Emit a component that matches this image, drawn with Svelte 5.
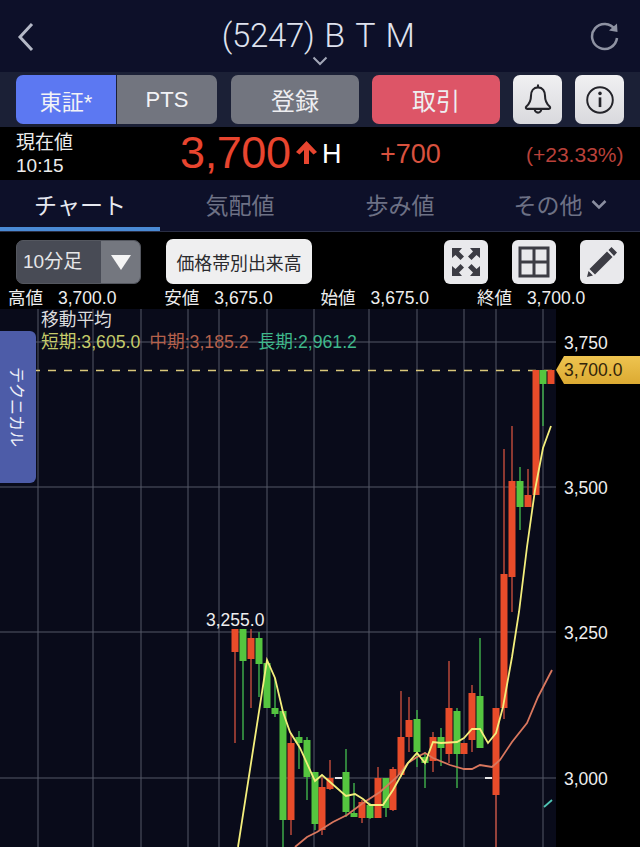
<script>
  const tabs = ['チャート', '気配値', '歩み値'];
  const stats = [
    ['高値', '3,700.0'],
    ['安値', '3,675.0'],
    ['始値', '3,675.0'],
    ['終値', '3,700.0'],
  ];
  const gridX = [38, 93, 141, 188, 219, 267, 314, 369, 417, 464, 496, 543];
  const gridY = [342, 487, 632, 778];
  const prices = [
    ['3,750', 342],
    ['3,500', 487],
    ['3,250', 632],
    ['3,000', 778],
  ];

  // x, up (green), wick top, body top, body bottom, wick bottom
  const candles = [
    [235, 0, 629, 629, 652, 743],
    [243, 1, 629, 629, 661, 740],
    [251, 0, 629, 638, 659, 708],
    [259, 1, 632, 638, 664, 697],
    [267, 1, 660, 663, 708, 708],
    [275, 1, 678, 708, 714, 717],
    [283, 1, 711, 711, 820, 847],
    [291, 0, 733, 743, 820, 835],
    [299, 1, 731, 737, 743, 769],
    [307, 1, 737, 740, 777, 800],
    [315, 1, 772, 772, 824, 830],
    [322, 0, 777, 787, 830, 835],
    [330, 0, 760, 778, 789, 790],
    [346, 1, 749, 772, 812, 817],
    [354, 1, 783, 813, 817, 817],
    [362, 0, 800, 802, 818, 823],
    [370, 1, 803, 805, 818, 819],
    [378, 0, 767, 778, 818, 818],
    [386, 1, 778, 778, 808, 817],
    [393, 0, 767, 769, 810, 811],
    [401, 0, 691, 737, 775, 777],
    [409, 0, 697, 720, 737, 752],
    [417, 1, 710, 719, 752, 767],
    [425, 1, 752, 757, 763, 788],
    [433, 0, 732, 737, 761, 772],
    [441, 1, 728, 737, 748, 766],
    [449, 0, 661, 708, 754, 763],
    [457, 1, 708, 711, 754, 788],
    [464, 0, 743, 743, 754, 754],
    [472, 0, 685, 693, 740, 752],
    [480, 1, 638, 696, 748, 748],
    [496, 0, 708, 708, 795, 847],
    [504, 0, 449, 574, 708, 719],
    [512, 0, 426, 481, 577, 612],
    [520, 1, 467, 481, 507, 530],
    [528, 0, 469, 495, 507, 507],
    [536, 0, 370, 370, 495, 495],
    [543, 1, 370, 370, 384, 426],
    [551, 0, 370, 370, 384, 384],
  ];

  const shortMa = '238,847 267,660 275,678 283,712 290,732 300,748 315,781 322,775 330,782 346,796 355,794 363,799 370,805 383,805 393,790 408,763 417,753 425,763 433,742 441,743 457,742 464,738 472,729 480,729 488,743 496,733 503,707 512,657 519,612 527,547 535,490 543,448 551,426';
  const midMa = '295,847 307,837 317,832 333,822 347,815 363,803 380,792 397,777 408,763 417,757 425,753 433,758 450,765 464,769 472,769 480,765 492,767 500,760 512,742 527,723 538,697 552,670';
</script>

<div class="page">
  <header class="title-bar">
    <svg class="back" viewBox="0 0 18 30" width="18" height="30">
      <path d="M15 2 3 15l12 13" />
    </svg>
    <div class="title">(5247) <span class="name">B T M</span></div>
    <svg class="caret" viewBox="0 0 16 10" width="16" height="10">
      <path d="M1.500 1.500 8 8l6.500-6.500" />
    </svg>
    <svg class="reload" viewBox="0 0 30 30" width="30" height="30">
      <path d="M25 8.500A12.500 12.500 0 1 0 27 17" />
      <path class="tip" d="M19 9.500 27.500 11 27 2.500z" />
    </svg>
  </header>

  <div class="toolbar">
    <div class="segment">
      <button class="seg on">東証*</button>
      <button class="seg">PTS</button>
    </div>
    <button class="act grey">登録</button>
    <button class="act red">取引</button>
    <button class="sq" aria-label="alert">
      <svg viewBox="0 0 30 36" width="28" height="34">
        <path d="M15 4.500c-5 0-7.500 4-7.500 9 0 6-2 9-5 11.500-1 1-.5 2.500 1 2.500h23c1.500 0 2-1.500 1-2.500-3-2.500-5-5.500-5-11.500 0-5-2.500-9-7.500-9z" />
        <path d="M15 1.500v3M11.500 28a3.500 3.500 0 0 0 7 0" />
      </svg>
    </button>
    <button class="sq" aria-label="info">
      <svg viewBox="0 0 34 34" width="30" height="30">
        <circle cx="17" cy="17" r="14.500" />
        <path class="thick" d="M17 14v11" />
        <circle class="dot" cx="17" cy="9.500" r="2" />
      </svg>
    </button>
  </div>

  <section class="quote">
    <div class="quote-label">
      <div>現在値</div>
      <div>10:15</div>
    </div>
    <div class="price">3,700</div>
    <svg class="arrow" viewBox="0 0 21 23" width="21" height="23">
      <path d="M10.500 0 21 11l-3.500 2.500-4.500-4.500v14H8V9l-4.500 4.500L0 11z" />
    </svg>
    <div class="flag">H</div>
    <div class="change">+700</div>
    <div class="pct">(+23.33%)</div>
  </section>

  <nav class="tabs">
    {#each tabs as tab, i}
      <div class="tab" class:active={i === 0}>{tab}</div>
    {/each}
    <div class="tab">
      その他
      <svg viewBox="0 0 16 10" width="16" height="11">
        <path d="M1.500 1.500 8 8l6.500-6.500" />
      </svg>
    </div>
  </nav>

  <section class="controls">
    <div class="buttons">
      <div class="period">
        <span class="period-name">10分足</span>
        <span class="period-open"><i></i></span>
      </div>
      <button class="volume">価格帯別出来高</button>
      <div class="tools">
        <button class="tool" aria-label="expand">
          <svg viewBox="0 0 36 36" width="36" height="36">
            <path d="M4 4h10l-3 3.500 5 5-3.500 3.500-5-5L4 14zM32 4v10l-3.500-3-5 5-3.500-3.500 5-5L22 4zM4 32V22l3.500 3 5-5 3.500 3.500-5 5L14 32zM32 32H22l3-3.500-5-5 3.500-3.500 5 5L32 22z" />
          </svg>
        </button>
        <button class="tool" aria-label="layout">
          <svg class="grid-icon" viewBox="0 0 36 36" width="36" height="36">
            <path d="M4 4h28v28H4zM18 4v28M4 18h28" />
          </svg>
        </button>
        <button class="tool" aria-label="draw">
          <svg viewBox="0 0 36 36" width="36" height="36">
            <path d="M27.500 3 33 8.500 30 12 24.500 6zM23 7.500l5.500 5.500L11 30.500 5.500 25zM4.500 27l4.500 4.500-6 1.500z" />
          </svg>
        </button>
      </div>
    </div>
    <div class="stats">
      {#each stats as [label, value]}
        <div class="stat"><span class="stat-label">{label}</span><span>{value}</span></div>
      {/each}
    </div>
  </section>

  <section class="chart">
    <svg class="plot" viewBox="0 309 640 538" width="640" height="538">
      <rect x="0" y="309" width="556" height="538" fill="#090b1a" />
      {#each gridX as x}
        <line x1={x} x2={x} y1="309" y2="847" class="grid" />
      {/each}
      {#each gridY as y}
        <line x1="0" x2="556" y1={y} y2={y} class="grid" />
      {/each}
      <line x1="0" x2="556" y1="370.500" y2="370.500" class="last" />

      <rect x="335" y="777" width="7" height="2" fill="#e8e8e8" />
      <rect x="485" y="777" width="7" height="2" fill="#e8e8e8" />

      {#each candles as [x, up, wt, bt, bb, wb]}
        <line x1={x} x2={x} y1={wt} y2={wb} class={up ? 'wick-up' : 'wick-down'} />
        <rect x={x - 3.5} y={bt} width="7" height={bb - bt} class={up ? 'body-up' : 'body-down'} />
      {/each}

      <polyline points={midMa} class="ma-mid" />
      <polyline points={shortMa} class="ma-short" />
      <line x1="544" y1="807" x2="552" y2="800" class="ma-long" />
    </svg>

    <div class="legend">
      <div>移動平均</div>
      <div class="legend-row">
        <span class="short">短期:3,605.0</span>
        <span class="mid">中期:3,185.2</span>
        <span class="long">長期:2,961.2</span>
      </div>
    </div>

    <div class="tech"><span>テクニカル</span></div>

    <div class="high-label">3,255.0</div>
    {#each prices as [text, y]}
      <div class="axis" style="top: {y - 309 - 10}px">{text}</div>
    {/each}
    <div class="tag">3,700.0</div>
  </section>
</div>

<style>
  :global(body) {
    margin: 0;
    background: #000;
  }

  .page {
    width: 640px;
    height: 847px;
    overflow: hidden;
    background: #000;
    color: #fff;
    font-family: 'Liberation Sans', 'Noto Sans CJK JP', sans-serif;
  }

  button {
    border: 0;
    padding: 0;
    font: inherit;
    color: inherit;
  }

  svg path,
  svg circle {
    fill: none;
  }

  .title-bar {
    position: relative;
    height: 72px;
    background: #0d1029;
    display: flex;
    align-items: center;
    justify-content: center;
    box-sizing: border-box;
    padding-bottom: 2px;
  }

  .back {
    position: absolute;
    left: 17px;
    top: 22px;
  }

  .back path {
    stroke: #b4b8c6;
    stroke-width: 3;
  }

  .title {
    font-size: 33px;
    color: #dfe2ee;
    font-family: Roboto, 'Liberation Sans', sans-serif;
    font-weight: 300;
    letter-spacing: -0.3px;
    white-space: pre;
    margin-left: -2px;
  }

  .name {
    font-size: 34px;
    margin-left: 2px;
    letter-spacing: 1.2px;
  }

  .caret {
    position: absolute;
    left: 312px;
    top: 56px;
  }

  .caret path {
    stroke: #a2a6b6;
    stroke-width: 2;
  }

  .reload {
    position: absolute;
    left: 590px;
    top: 21px;
  }

  .reload path {
    stroke: #8e92a2;
    stroke-width: 2.500;
  }

  .reload path.tip {
    fill: #8e92a2;
    stroke: none;
  }

  .toolbar {
    height: 55px;
    background: #1b2036;
    display: flex;
    align-items: flex-start;
    box-sizing: border-box;
    padding: 3px 16px 0;
  }

  .segment {
    display: flex;
    gap: 1px;
    width: 201px;
    height: 49px;
    margin-right: 14px;
    border-radius: 7px;
    overflow: hidden;
  }

  .seg {
    flex: 1;
    height: 49px;
    background: #72757f;
    font-size: 22px;
    color: #f3f3f6;
  }

  .seg.on {
    background: #5c78f2;
  }

  .act {
    width: 128px;
    height: 49px;
    border-radius: 7px;
    font-size: 24px;
    margin-right: 13px;
    color: #eeeef1;
  }

  .act.grey {
    background: #72757f;
  }

  .act.red {
    background: #dd5567;
  }

  .sq {
    width: 49px;
    height: 49px;
    border-radius: 7px;
    background: linear-gradient(#f0f0f2, #d9d9dd);
    margin-right: 13px;
    display: flex;
    align-items: center;
    justify-content: center;
  }

  .sq:last-child {
    margin-right: 0;
  }

  .sq path,
  .sq circle {
    stroke: #24242a;
    stroke-width: 2.200;
  }

  .sq path.thick {
    stroke-width: 3;
  }

  .sq circle.dot {
    fill: #24242a;
    stroke: none;
  }

  .quote {
    height: 53px;
    position: relative;
    display: flex;
    align-items: center;
    background: #000;
  }

  .quote-label {
    width: 164px;
    padding-left: 16px;
    font-size: 19px;
    line-height: 23px;
    color: #ececec;
  }

  .price {
    font-size: 45px;
    color: #e8452f;
    letter-spacing: -0.4px;
    width: 116px;
    margin-top: -1px;
  }

  .arrow {
    margin-top: -2px;
  }

  .arrow path {
    fill: #e8452f;
  }

  .flag {
    font-size: 27px;
    margin-left: 5px;
    width: 58px;
    margin-top: 2px;
  }

  .change {
    font-size: 27px;
    color: #d8513e;
    width: 146px;
    margin-top: 2px;
  }

  .pct {
    font-size: 21px;
    color: #b9413a;
    margin-top: 2px;
  }

  .tabs {
    height: 52px;
    box-sizing: border-box;
    background: #0d1029;
    border-bottom: 1px solid #2a2e44;
    display: grid;
    grid-template-columns: repeat(4, 160px);
  }

  .tab {
    display: flex;
    align-items: center;
    justify-content: center;
    gap: 8px;
    padding-bottom: 3px;
    font-size: 23px;
    color: #6d7185;
    box-sizing: border-box;
    height: 51px;
  }

  .tab.active {
    color: #e6e8f0;
    border-bottom: 4px solid #4a8ad4;
    padding-bottom: 0;
  }

  .tab svg path {
    stroke: #8a8ea0;
    stroke-width: 2.500;
  }

  .controls {
    height: 77px;
    background: #000;
    box-sizing: border-box;
    padding-top: 7px;
  }

  .buttons {
    display: flex;
    align-items: flex-start;
    padding: 0 16px;
    height: 45px;
  }

  .period {
    width: 125px;
    height: 44px;
    display: flex;
    margin-top: 1px;
    border-radius: 7px;
    overflow: hidden;
    background: #484b55;
    margin-right: 25px;
    box-sizing: border-box;
    border: 1px solid #54575f;
  }

  .period-name {
    flex: 1;
    font-size: 19px;
    line-height: 42px;
    padding-left: 6px;
    color: #e6e6e8;
  }

  .period-open {
    width: 39px;
    background: #74777f;
    display: flex;
    align-items: center;
    justify-content: center;
  }

  .period-open i {
    width: 0;
    height: 0;
    border-left: 10px solid transparent;
    border-right: 10px solid transparent;
    border-top: 15px solid #f4f4f4;
  }

  .volume {
    width: 146px;
    height: 45px;
    border-radius: 7px;
    background: #efeff0;
    color: #2a2a2e;
    font-size: 17.900px;
    white-space: nowrap;
  }

  .tools {
    display: flex;
    gap: 24px;
    margin-left: auto;
    padding-top: 1px;
  }

  .tool {
    width: 44px;
    height: 44px;
    border-radius: 6px;
    background: #e9e9ec;
    display: flex;
    align-items: center;
    justify-content: center;
  }

  .tool svg path {
    fill: #3c3c44;
  }

  .tool svg.grid-icon path {
    fill: none;
    stroke: #3c3c44;
    stroke-width: 3;
  }

  .stats {
    display: grid;
    grid-template-columns: repeat(4, 156.300px);
    padding-left: 8px;
    font-size: 17.500px;
    line-height: 20px;
    margin-top: 4px;
    color: #eeeeee;
  }

  .stat-label {
    display: inline-block;
    width: 50px;
  }

  .chart {
    position: relative;
    height: 538px;
    overflow: hidden;
  }

  .plot {
    display: block;
  }

  .grid {
    stroke: #555866;
    stroke-width: 1;
  }

  .last {
    stroke: #d9c77a;
    stroke-width: 1.500;
    stroke-dasharray: 8 8;
  }

  .wick-up {
    stroke: #3da948;
    stroke-width: 1.500;
  }

  .wick-down {
    stroke: #b8483a;
    stroke-width: 1.500;
  }

  .body-up {
    fill: #55c53f;
  }

  .body-down {
    fill: #e84c2a;
  }

  .ma-short,
  .ma-mid,
  .ma-long {
    fill: none;
    stroke-width: 1.800;
  }

  .ma-short {
    stroke: #f3ee7c;
  }

  .ma-mid {
    stroke: #d9775e;
  }

  .ma-long {
    stroke: #4fc4b4;
  }

  .legend {
    position: absolute;
    left: 41px;
    top: 0;
    font-size: 17.700px;
    line-height: 22px;
    color: #dcdcde;
  }

  .legend-row {
    display: flex;
    gap: 9px;
  }

  .short {
    color: #c5cb6b;
  }

  .mid {
    color: #b5614c;
  }

  .long {
    color: #3fb88c;
  }

  .tech {
    position: absolute;
    left: 0;
    top: 22px;
    width: 36px;
    height: 152px;
    border-radius: 0 6px 6px 0;
    background: #4d5ca8;
    display: flex;
    align-items: center;
    justify-content: center;
  }

  .tech span {
    writing-mode: vertical-rl;
    text-orientation: sideways;
    font-size: 16px;
    color: #eef0f8;
  }

  .high-label {
    position: absolute;
    left: 206px;
    top: 301px;
    font-size: 17.500px;
    line-height: 20px;
    color: #eeeeee;
  }

  .axis {
    position: absolute;
    left: 564px;
    font-size: 17.500px;
    line-height: 22px;
    color: #eeeeee;
  }

  .tag {
    position: absolute;
    left: 556px;
    top: 47px;
    width: 84px;
    height: 28px;
    box-sizing: border-box;
    padding-left: 8px;
    font-size: 17.500px;
    line-height: 28px;
    color: #32240a;
    background: linear-gradient(#eec450, #dcaa32);
    clip-path: polygon(0 50%, 8px 0, 100% 0, 100% 100%, 8px 100%);
  }
</style>
